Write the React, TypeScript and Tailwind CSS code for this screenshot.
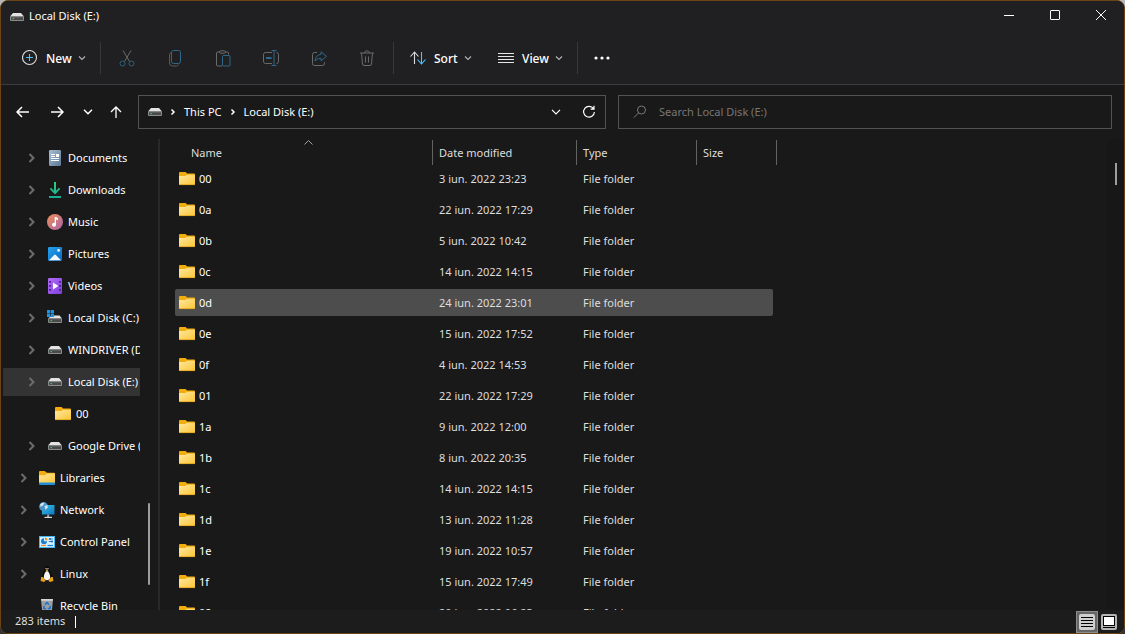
import React from 'react';

type IconProps = { className?: string };

const DriveIcon = ({ className = '' }: IconProps) => (
  <svg className={`shrink-0 ${className}`} width="14" height="8" viewBox="0 0 14 8">
    <path d="M3 0h8l3 3.6H0z" fill="#e3e3e3" />
    <path d="M0 3.5h14V7q0 1-1 1H1Q0 8 0 7z" fill="#8b8b8b" />
    <path d="M1 4.2h12V7H1z" fill="#4a4a4a" />
    <rect x="2.6" y="5" width="1.2" height="1.2" fill="#3fe04c" />
  </svg>
);

const FolderIcon = () => (
  <svg className="shrink-0" width="16" height="14" viewBox="0 0 16 14">
    <defs>
      <linearGradient id="folder" x1="0" y1="0" x2="1" y2="1">
        <stop offset="0" stopColor="#ffe8a0" />
        <stop offset="1" stopColor="#fcc536" />
      </linearGradient>
    </defs>
    <path d="M0 1Q0 0 1 0h5.600L8 1.500h7q1 0 1 1V7H0z" fill="#f3ad0b" />
    <path d="M0 4h6.200L8 2.800h7.200q.8 0 .8.800v8.600q0 .8-.8.800H.8q-.8 0-.8-.8z" fill="url(#folder)" />
    <path d="M.3 12.600h15.400" stroke="#e0a21a" strokeWidth=".8" />
  </svg>
);

const LibraryIcon = () => (
  <svg width="16" height="16" viewBox="0 0 16 16">
    <path d="M0 2Q0 1 1 1h4.6L8 2.7h7q1 0 1 1V8H0z" fill="#f3ad0b" />
    <path d="M0 5.2h6.2L8 3.5h8V13H0z" fill="url(#folder)" />
    <path d="M0 12.6h16V14q0 1-1 1H1q-1 0-1-1z" fill="#1f8fd8" />
  </svg>
);

const DocumentsIcon = () => (
  <svg width="16" height="16" viewBox="0 0 16 16">
    <defs>
      <linearGradient id="doc" x1="0" y1="0" x2="1" y2="1">
        <stop offset="0" stopColor="#a9bdd2" />
        <stop offset="1" stopColor="#5b7896" />
      </linearGradient>
    </defs>
    <rect x="2" width="12" height="16" rx="1.2" fill="url(#doc)" />
    <path d="M4 4.500h4M4 6.500h4M4 8.500h8M4 10.500h8" stroke="#fff" />
    <rect x="9" y="4" width="3" height="3" fill="#fff" />
  </svg>
);

const DownloadsIcon = () => (
  <svg width="16" height="16" viewBox="0 0 16 16" fill="none">
    <defs>
      <linearGradient id="down" x1="0" y1="0" x2="0" y2="16" gradientUnits="userSpaceOnUse">
        <stop offset="0" stopColor="#2ed07c" />
        <stop offset="1" stopColor="#16ab96" />
      </linearGradient>
    </defs>
    <path d="M7 0h2v8.800l3-3 1.200 1.200L8 12.400 2.800 7 4 5.800l3 3zM2 14h12v2H2z" fill="url(#down)" />
  </svg>
);

const MusicIcon = () => (
  <svg width="16" height="16" viewBox="0 0 16 16">
    <defs>
      <linearGradient id="music" x1="0" y1="0" x2="1" y2="1">
        <stop offset="0" stopColor="#f09058" />
        <stop offset="1" stopColor="#a864a8" />
      </linearGradient>
    </defs>
    <circle cx="8" cy="8" r="8" fill="url(#music)" />
    <circle cx="7" cy="10.7" r="2" fill="#fff" />
    <path d="M7.700 3h1.300l2 1.200v2L9 5.300v5.500H7.700z" fill="#fff" />
  </svg>
);

const PicturesIcon = () => (
  <svg width="16" height="16" viewBox="0 0 16 16">
    <defs>
      <linearGradient id="pic" x1="0" y1="0" x2="1" y2="1">
        <stop offset="0" stopColor="#26a2ee" />
        <stop offset="1" stopColor="#0b68c4" />
      </linearGradient>
    </defs>
    <rect x="1" y="1" width="14" height="14" rx="1.2" fill="url(#pic)" />
    <path d="M2 14.300 7.200 8.900q.8-.8 1.600 0L14 14.300z" fill="#f4f9ff" />
    <circle cx="11.600" cy="4.400" r="1.300" fill="#fff" />
  </svg>
);

const VideosIcon = () => (
  <svg width="16" height="16" viewBox="0 0 16 16">
    <defs>
      <linearGradient id="vid" x1="0" y1="0" x2="1" y2="1">
        <stop offset="0" stopColor="#b46cf4" />
        <stop offset="1" stopColor="#8040e0" />
      </linearGradient>
    </defs>
    <rect x="1" width="14" height="16" rx="1.200" fill="url(#vid)" />
    <path d="M3 3v12M13 3v12" stroke="#44208c" strokeWidth="1.800" strokeDasharray="1.800 2.200" />
    <path d="M6 4.600 11.400 8 6 11.400z" fill="#fff" />
  </svg>
);

const SystemDriveIcon = () => (
  <svg width="16" height="16" viewBox="0 0 16 16">
    <path d="M5 5.500h7.500l2.500 3H1z" fill="#e3e3e3" />
    <path d="M1 8.500h14V12q0 1-1 1H2q-1 0-1-1z" fill="#8b8b8b" />
    <path d="M2 9.200h12V12H2z" fill="#4a4a4a" />
    <rect x="3.600" y="10" width="1.200" height="1.200" fill="#3fe04c" />
    <path d="M0 0h3.200v3.200H0zM3.800 0H7v3.200H3.800zM0 3.800h3.200V7H0zM3.800 3.800H7V7H3.800z" fill="#1c95e6" />
  </svg>
);

const TreeDriveIcon = () => (
  <span className="flex h-4 w-4 items-center justify-center">
    <DriveIcon />
  </span>
);

const NetworkIcon = () => (
  <svg width="16" height="16" viewBox="0 0 16 16">
    <defs>
      <linearGradient id="net" x1="0" y1="0" x2="1" y2="1">
        <stop offset="0" stopColor="#35c7e8" />
        <stop offset="1" stopColor="#0f74c2" />
      </linearGradient>
    </defs>
    <path d="M3 3h12.500v9.500H3z" fill="url(#net)" />
    <path d="M8.200 12.500h2V15h-2z" fill="#9aa6ad" />
    <path d="M5.500 14.800h7.500v1.200H5.500z" fill="#d5dadd" />
    <circle cx="4.600" cy="4.600" r="4.500" fill="#4c93c6" />
    <path d="M1 2.500Q3 0 5.500 1L4 3.500 1.500 4.800zM5.500 4l3-1 .3 2.500-2.300 2.200z" fill="#cfe6f4" />
  </svg>
);

const ControlPanelIcon = () => (
  <svg width="16" height="16" viewBox="0 0 16 16">
    <rect y="2" width="16" height="12" fill="#45b8f2" />
    <rect x="1" y="3" width="14" height="10" fill="#d6f0ff" />
    <path d="M5 7.200V4.200A3 3 0 1 0 8 7.200z" fill="#1b7fd0" />
    <path d="M6 6.200V3.600A2.700 2.700 0 0 1 8.600 6.200z" fill="#f28a1c" />
    <path d="M9.800 5h4M9.800 7.500h4" stroke="#1b7fd0" strokeWidth="1.200" />
    <path d="M11 4v2M13 6.500v2" stroke="#145c9c" strokeWidth="1.200" />
    <path d="M2 11.500h5" stroke="#f28a1c" strokeWidth="1.200" />
    <path d="M8.500 11.500H14" stroke="#1b7fd0" strokeWidth="1.200" />
  </svg>
);

const LinuxIcon = () => (
  <svg width="16" height="16" viewBox="0 0 16 16">
    <path d="M8 0q2.600 0 2.600 3.400 0 1.600 1.400 3.600 1.600 2.600 1.400 6H2.800q-.4-3.400 1.400-6 1.200-2 1.200-3.600Q5.400 0 8 0z" fill="#0a0a0a" />
    <path d="M8 5q1.600.2 2.400 2.400 1.200 2.600.6 5-1 1.800-3 1.800t-3-1.800q-.6-2.400.6-5Q6.400 5.200 8 5z" fill="#f4f4f4" />
    <path d="M6.600 4 8 3.200 9.400 4 8 5.400z" fill="#f0a81c" />
    <path d="M2.200 11 4 11l2.600 3.600q-.8 1.600-2.400 1.200L1.600 15zM13.800 11H12l-2.600 3.600q.8 1.600 2.400 1.200L14.400 15z" fill="#e8a01a" />
    <circle cx="7" cy="2.600" r=".6" fill="#fff" />
    <circle cx="9" cy="2.600" r=".6" fill="#fff" />
  </svg>
);

const RecycleIcon = () => (
  <svg width="16" height="16" viewBox="0 0 16 16">
    <path d="M2 1h12l-1.400 15H3.400z" fill="#9a9fa4" />
    <path d="M2 1h12l-.2 1.800H2.200z" fill="#d2d5d8" />
    <path d="M6 6.500 8 4.600l2 1.900M10.800 7.600l.6 2.600-2.600.6M7 11l-2.400-.8.800-2.600" stroke="#1d74c8" strokeWidth="1.500" fill="none" />
  </svg>
);

const ChevronRight = ({ className = '' }: IconProps) => (
  <svg className={className} width="16" height="16" viewBox="0 0 16 16" fill="none" stroke="currentColor">
    <path d="m5.500 4 4 4-4 4" strokeWidth="2" />
  </svg>
);

const ChevronDown = ({ className = '' }: IconProps) => (
  <svg className={className} width="8" height="8" viewBox="0 0 8 8" fill="none" stroke="currentColor">
    <path d="M1 2.500 4 5.500l3-3" strokeWidth="1.100" />
  </svg>
);

const CrumbChevron = () => (
  <svg className="w-[22px] shrink-0" height="8" viewBox="0 0 22 8" fill="none" stroke="#fff" strokeWidth="1.500">
    <path d="M9.500 1.500 12 4 9.500 6.500" />
  </svg>
);

const Separator = () => <div className="h-8 w-px shrink-0 bg-[#38383a]" />;

const tools = [
  {
    label: 'Cut',
    icon: (
      <>
        <path d="M4 .5l6.500 11M12 .5l-6.500 11" stroke="#6a6a6a" />
        <circle cx="3.500" cy="13.500" r="2.500" stroke="#2c607e" />
        <circle cx="12.500" cy="13.500" r="2.500" stroke="#2c607e" />
      </>
    ),
  },
  {
    label: 'Copy',
    icon: (
      <>
        <path d="M4.500 2.500Q2.500 3 2.500 5v8q0 3 3 3h4q1.500 0 2-1.500" stroke="#5a5a5a" />
        <rect x="4.500" y=".5" width="9" height="13" rx="2" stroke="#2f6888" />
      </>
    ),
  },
  {
    label: 'Paste',
    icon: (
      <>
        <path d="M5 2H2.500q-1 0-1 1v12q0 1 1 1H7M10 2h2.500q1 0 1 1v1.500" stroke="#6a6a6a" />
        <rect x="4.500" y=".8" width="6" height="2.400" rx="1.200" stroke="#6a6a6a" />
        <rect x="7.500" y="5.500" width="7.500" height="10.500" rx="1" stroke="#2f6888" />
      </>
    ),
  },
  {
    label: 'Rename',
    icon: (
      <>
        <path d="M9 2.500H2.500q-2 0-2 2v7q0 2 2 2H9M13.500 2.500q2 0 2 2v7q0 2-2 2" stroke="#6a6a6a" />
        <path d="M3 8h5.500" stroke="#2f6888" strokeWidth="2" />
        <path d="M8.500.5h5M8.500 15.500h5M11 .5v15" stroke="#2f6888" />
      </>
    ),
  },
  {
    label: 'Share',
    icon: (
      <>
        <path d="M6 2.500H3.500q-2 0-2 2v9q0 2 2 2h8q2 0 2-2V12" stroke="#6a6a6a" />
        <path d="M10 1.800 15.500 6.300 10 10.800V8.300Q6.500 8 4 11q.5-6 6-6.600z" stroke="#2f6888" strokeLinejoin="round" />
      </>
    ),
  },
  {
    label: 'Delete',
    icon: (
      <path d="M1 3h14M5.500 3Q5.800.8 8 .8T10.500 3M2.500 3l1 11q.2 1.500 1.500 1.500h6q1.300 0 1.500-1.500l1-11M6.500 6.500v6M9.500 6.500v6" stroke="#6a6a6a" />
    ),
  },
];

const treeItems = [
  { label: 'Documents', level: 1, icon: <DocumentsIcon /> },
  { label: 'Downloads', level: 1, icon: <DownloadsIcon /> },
  { label: 'Music', level: 1, icon: <MusicIcon /> },
  { label: 'Pictures', level: 1, icon: <PicturesIcon /> },
  { label: 'Videos', level: 1, icon: <VideosIcon /> },
  { label: 'Local Disk (C:)', level: 1, icon: <SystemDriveIcon /> },
  { label: 'WINDRIVER (D:)', level: 1, icon: <TreeDriveIcon /> },
  { label: 'Local Disk (E:)', level: 1, icon: <TreeDriveIcon />, active: true },
  { label: '00', level: 2, icon: <FolderIcon />, leaf: true },
  { label: 'Google Drive (G:)', level: 1, icon: <TreeDriveIcon /> },
  { label: 'Libraries', level: 0, icon: <LibraryIcon /> },
  { label: 'Network', level: 0, icon: <NetworkIcon /> },
  { label: 'Control Panel', level: 0, icon: <ControlPanelIcon /> },
  { label: 'Linux', level: 0, icon: <LinuxIcon /> },
  { label: 'Recycle Bin', level: 0, icon: <RecycleIcon />, leaf: true },
];

const indents = ['pl-[13px]', 'pl-[21px]', 'pl-[29px]'];

const files = [
  { name: '00', date: '3 iun. 2022 23:23' },
  { name: '0a', date: '22 iun. 2022 17:29' },
  { name: '0b', date: '5 iun. 2022 10:42' },
  { name: '0c', date: '14 iun. 2022 14:15' },
  { name: '0d', date: '24 iun. 2022 23:01', hovered: true },
  { name: '0e', date: '15 iun. 2022 17:52' },
  { name: '0f', date: '4 iun. 2022 14:53' },
  { name: '01', date: '22 iun. 2022 17:29' },
  { name: '1a', date: '9 iun. 2022 12:00' },
  { name: '1b', date: '8 iun. 2022 20:35' },
  { name: '1c', date: '14 iun. 2022 14:15' },
  { name: '1d', date: '13 iun. 2022 11:28' },
  { name: '1e', date: '19 iun. 2022 10:57' },
  { name: '1f', date: '15 iun. 2022 17:49' },
  { name: '02', date: '20 iun. 2022 06:23' },
];

const TitleBar = () => (
  <header className="flex h-[31px] shrink-0 items-center pl-[9px]">
    <DriveIcon />
    <h1 className="ml-[5px] flex-1 text-[11px] text-white">Local Disk (E:)</h1>
    <button aria-label="Minimize" className="flex h-7 w-[46px] items-center justify-center self-start">
      <svg width="10" height="10" stroke="#fff"><path d="M0 5.500h10" /></svg>
    </button>
    <button aria-label="Maximize" className="flex h-7 w-[46px] items-center justify-center self-start">
      <svg width="10" height="10" stroke="#fff" fill="none"><rect x=".5" y=".5" width="9" height="9" rx=".5" /></svg>
    </button>
    <button aria-label="Close" className="flex h-7 w-[46px] items-center justify-center self-start">
      <svg width="10" height="10" stroke="#fff"><path d="m0 0 10 10M10 0 0 10" /></svg>
    </button>
  </header>
);

const Toolbar = () => (
  <div className="flex h-[53px] shrink-0 items-center border-b border-[#3c3c3e] text-xs font-medium text-white">
    <button className="flex h-8 w-[99px] items-center gap-2 pl-[21px]">
      <svg width="16" height="16" viewBox="0 0 16 16" fill="none">
        <circle cx="7.500" cy="7.500" r="7" stroke="#dcdcdc" strokeWidth="1.100" />
        <path d="M7.500 4v7M4 7.500h7" stroke="#4cc2ff" strokeWidth="1.100" />
      </svg>
      <span className="pt-0.5">New</span>
      <ChevronDown className="-ml-0.5 text-[#b4b4b4]" />
    </button>
    <Separator />
    <div className="mx-0.5 flex">
      {tools.map((tool) => (
        <button key={tool.label} aria-label={tool.label} disabled className="flex h-8 w-12 items-center justify-center">
          <svg width="16" height="17" viewBox="0 0 16 17" fill="none">{tool.icon}</svg>
        </button>
      ))}
    </div>
    <Separator />
    <button className="flex h-8 w-[88px] items-center gap-2 pl-4">
      <svg width="16" height="14" viewBox="0 0 16 14" fill="none" strokeWidth="1.100">
        <path d="M4.500 13V1.500M.5 5.500l4-4.500 4 4.500" stroke="#dcdcdc" />
        <path d="M11.500 1v11.500M7.500 8.500l4 4.500 4-4.500" stroke="#4cc2ff" />
      </svg>
      <span className="pt-0.5">Sort</span>
      <ChevronDown className="-ml-0.5 text-[#b4b4b4]" />
    </button>
    <button className="flex h-8 w-[95px] items-center gap-2 pl-4">
      <svg width="16" height="14" viewBox="0 0 16 14" stroke="#e6e6e6">
        <path d="M0 2.500h16M0 5.500h16M0 8.500h16M0 11.500h16" />
      </svg>
      <span className="pt-0.5">View</span>
      <ChevronDown className="-ml-0.5 text-[#b4b4b4]" />
    </button>
    <Separator />
    <button aria-label="See more" className="flex h-8 w-12 items-center justify-center">
      <svg width="16" height="4" fill="#fff">
        <circle cx="2" cy="2" r="1.600" />
        <circle cx="8" cy="2" r="1.600" />
        <circle cx="14" cy="2" r="1.600" />
      </svg>
    </button>
  </div>
);

const NavBar = () => (
  <div className="flex h-[54px] shrink-0 items-center pr-3 pl-[3px]">
    <nav className="mr-2 flex text-white">
      <button aria-label="Back" className="flex h-8 w-9 items-center justify-center">
        <svg width="13" height="12" viewBox="0 0 13 12" fill="none" stroke="currentColor" strokeWidth="1.500">
          <path d="M13 6H1M6 1 1 6l5 5" />
        </svg>
      </button>
      <button aria-label="Forward" className="flex h-8 w-[34px] items-center justify-center">
        <svg width="13" height="12" viewBox="0 0 13 12" fill="none" stroke="currentColor" strokeWidth="1.500">
          <path d="M0 6h12M7 1l5 5-5 5" />
        </svg>
      </button>
      <button aria-label="Recent locations" className="flex h-8 w-7 items-center justify-center">
        <svg width="10" height="6" viewBox="0 0 10 6" fill="none" stroke="currentColor" strokeWidth="1.500">
          <path d="m1 .8 4 4 4-4" />
        </svg>
      </button>
      <button aria-label="Up" className="flex h-8 w-7 items-center justify-center">
        <svg width="12" height="12" viewBox="0 0 12 12" fill="none" stroke="currentColor" strokeWidth="1.300">
          <path d="M6 12V1M1 6l5-5 5 5" />
        </svg>
      </button>
    </nav>
    <div className="flex h-[34px] grow-[457] basis-0 items-center border border-[#535353] pl-[9px] text-[11px] text-white">
      <DriveIcon />
      <CrumbChevron />
      <a href="#this-pc" className="whitespace-nowrap">This PC</a>
      <CrumbChevron />
      <a href="#local-disk" className="flex-1 whitespace-nowrap">Local Disk (E:)</a>
      <button aria-label="Previous locations" className="flex h-full w-[33px] items-center justify-center">
        <svg width="10" height="6" viewBox="0 0 10 6" fill="none" stroke="currentColor" strokeWidth="1.200">
          <path d="m1 .8 4 4 4-4" />
        </svg>
      </button>
      <button aria-label="Refresh" className="flex h-full w-[33px] items-center justify-center">
        <svg width="14" height="14" viewBox="0 0 14 14" fill="none" stroke="currentColor" strokeWidth="1.200">
          <path d="M11.500 3.700A5.400 5.400 0 1 0 12.400 7M12 .8v3.400H8.600" />
        </svg>
      </button>
    </div>
    <div className="ml-3 flex h-[34px] grow-[478] basis-0 items-center gap-3 border border-[#535353] pl-3.5">
      <svg className="shrink-0 text-[#7a7a7a]" width="14" height="14" viewBox="0 0 14 14" fill="none" stroke="currentColor">
        <circle cx="8.500" cy="5" r="4" />
        <path d="M5.600 7.900.8 12.700" />
      </svg>
      <input
        type="search"
        aria-label="Search Local Disk (E:)"
        placeholder="Search Local Disk (E:)"
        className="h-full min-w-0 flex-1 bg-transparent pb-0.5 text-[11px] text-white outline-none placeholder:text-[#777777]"
      />
    </div>
  </div>
);

const Sidebar = () => (
  <aside className="flex shrink-0 border-r-2 border-[#292929]">
    <ul className="ml-0.5 flex w-[137px] flex-col gap-1 overflow-hidden pt-[5px] text-[11px] text-white">
      {treeItems.map((item) => (
        <li key={item.label} className={`shrink-0 ${item.active ? 'bg-[#333333]' : ''}`}>
          <a href="#folder" className={`flex h-7 items-center whitespace-nowrap ${indents[item.level]}`}>
            <span className="mr-[7px] w-4 shrink-0 text-[#6c6c6c]">{!item.leaf && <ChevronRight />}</span>
            <span className="mr-[5px] w-4 shrink-0">{item.icon}</span>
            {item.label}
          </a>
        </li>
      ))}
    </ul>
    <div className="flex w-[18px] flex-col items-center pb-[25px]">
      <div className="mt-auto h-[82px] w-0.5 rounded-full bg-[#9d9d9d]" />
    </div>
  </aside>
);

const headCell = 'p-0 pt-0.5 pl-1.5 font-normal shadow-[inset_-1px_0_#636363]';

const FileList = () => (
  <main className="min-w-0 flex-1 overflow-hidden pt-px pl-[15px]">
    <table className="table-fixed border-collapse text-left text-[11px] text-[#dedede]">
      <colgroup>
        <col className="w-[258px]" />
        <col className="w-[144px]" />
        <col className="w-[120px]" />
        <col className="w-[80px]" />
      </colgroup>
      <thead>
        <tr className="h-[25px]">
          <th className="relative p-0 pt-0.5 pl-4 font-normal shadow-[inset_-1px_0_#636363]">
            <button>Name</button>
            <svg className="absolute top-0 left-[129px]" width="9" height="5" fill="none" stroke="#a0a0a0">
              <path d="m.5 4.500 4-4 4 4" />
            </svg>
          </th>
          <th className={headCell}><button>Date modified</button></th>
          <th className={headCell}><button>Type</button></th>
          <th className={headCell}><button>Size</button></th>
        </tr>
      </thead>
      <tbody>
        {files.map((file) => {
          const bg = file.hovered ? 'bg-[#4d4d4d]' : '';
          return (
            <tr key={file.name} className="h-[31px] align-top">
              <td className="p-0">
                <div className={`flex h-[27px] items-center gap-1 rounded-l-xs pl-1 text-white ${bg}`}>
                  <FolderIcon />
                  <span className="pt-px">{file.name}</span>
                </div>
              </td>
              <td className="p-0">
                <div className={`flex h-[27px] items-center pt-px pl-1.5 ${bg}`}>{file.date}</div>
              </td>
              <td className="p-0">
                <div className={`flex h-[27px] items-center pt-px pl-1.5 ${bg}`}>File folder</div>
              </td>
              <td className="p-0 pr-1">
                <div className={`h-[27px] rounded-r-xs ${bg}`} />
              </td>
            </tr>
          );
        })}
      </tbody>
    </table>
  </main>
);

const StatusBar = () => (
  <footer className="flex h-[23px] shrink-0 items-center bg-[#1c1c1c] pr-[7px] pl-3.5 text-[11px] text-[#dedede]">
    <span>283 items</span>
    <span className="ml-2.5 h-3 w-px bg-white" />
    <button aria-label="Details view" className="ml-auto flex h-[22px] w-[22px] items-center justify-center border border-[#8c8c8c] bg-[#666666]">
      <svg width="16" height="16" viewBox="0 0 16 16">
        <rect width="16" height="16" rx="2" fill="#cfcfcf" />
        <path d="M2 3.500h12M2 6.500h12M2 9.500h12M2 12.500h12" stroke="#000" />
      </svg>
    </button>
    <button aria-label="Large icons view" className="ml-[3px] flex h-[22px] w-4 items-center">
      <svg width="16" height="16" viewBox="0 0 16 16">
        <rect width="16" height="16" rx="2" fill="#b4b4b4" />
        <rect x="2.500" y="2.500" width="11" height="9" fill="#fff" stroke="#000" />
        <path d="M2 13.500h12" stroke="#000" />
      </svg>
    </button>
  </footer>
);

const App = () => {
  return (
    <div className="h-screen bg-gradient-to-b from-[#b8b8b8] to-[#333333]">
      <div className="flex h-full flex-col overflow-hidden rounded-lg border border-[#6a4414] bg-[#191919] font-['Noto_Sans',sans-serif]">
        <div className="shrink-0 bg-[#202022]">
          <TitleBar />
          <Toolbar />
        </div>
        <NavBar />
        <div className="flex min-h-0 flex-1">
          <Sidebar />
          <FileList />
          <div className="flex w-[17px] shrink-0 justify-center bg-[#171717] pt-6">
            <div className="h-[22px] w-0.5 bg-[#9d9d9d]" />
          </div>
        </div>
        <StatusBar />
      </div>
    </div>
  );
};

export default App;
